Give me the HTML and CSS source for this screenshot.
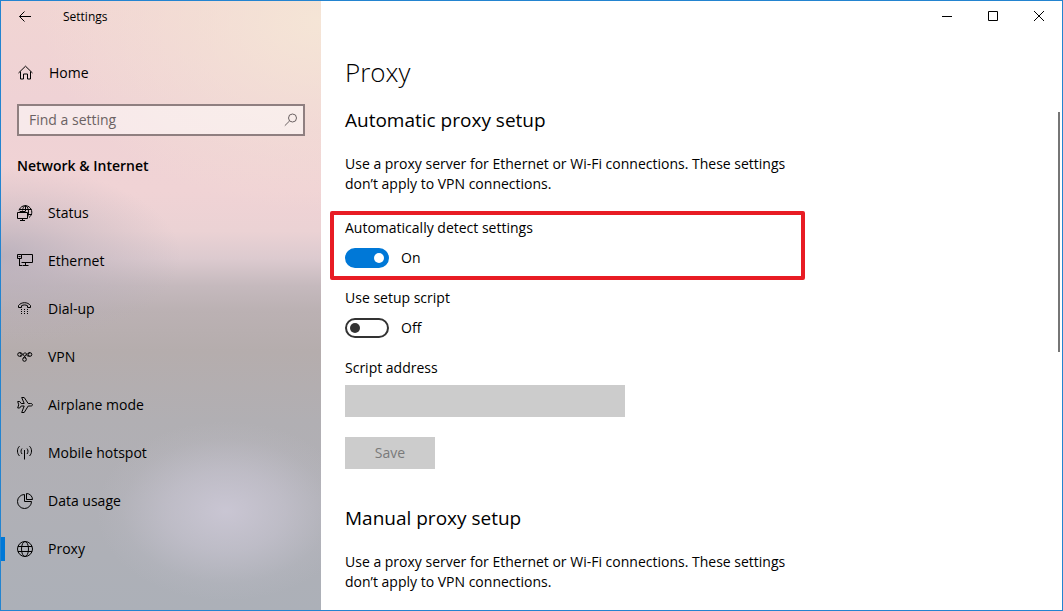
FILE: index.html
```html
<!DOCTYPE html>
<html lang="en">
<head>
    <meta charset="UTF-8">
    <meta name="viewport" content="width=device-width, initial-scale=1.0">
    <title>Settings</title>
    <link rel="stylesheet" href="styles.css">
</head>
<body>
    <div class="window">
        <!-- Sidebar -->
        <aside class="sidebar">
            <header class="titlebar">
                <button class="back-button" type="button" aria-label="Back">
                    <svg class="icon" viewBox="0 0 16 16"><path d="M14 7.5H2.500M7.500 2.500l-5 5 5 5"/></svg>
                </button>
                <span class="app-name">Settings</span>
            </header>

            <a class="nav-item home" href="#">
                <svg class="icon" viewBox="0 0 16 16"><path d="M1.5 8L8.500 1.200l7 6.800M3.500 6.500v7.500h3v-5h4v5h3V6.500"/></svg>
                Home
            </a>

            <div class="search">
                <input type="text" class="search-input" placeholder="Find a setting" aria-label="Find a setting">
                <svg class="icon search-icon" viewBox="0 0 16 16"><circle cx="8.5" cy="6" r="4"/><path d="M5.500 9L.8 13.700"/></svg>
            </div>

            <h2 class="category">Network &amp; Internet</h2>

            <nav>
                <a class="nav-item" href="#">
                    <svg class="icon" viewBox="0 0 16 16"><path d="M2 5.500A6.500 6.500 0 1 1 12 12.500M2.500 4.500h12M10.500 9.500h4.500M5.500 5.500c.3-2.500 1.300-4.500 3-5 2 1 3 3.500 3 6.500 0 2-.3 3.500-1 5M8.500 .5v6"/><path d="M.5 7.500h10v6H.5zM3 7.500v-1h5M5.500 13.500v2M3 15.500h5"/></svg>
                    Status
                </a>
                <a class="nav-item" href="#">
                    <svg class="icon" viewBox="0 0 16 16"><path d="M4.500 1.500h11v8H4.500M.5 1.500h4v4h-4zM2.500 5.500v7M2 12.500h3M1.500 3.500h2M8.500 9.500v3M5.500 12.500h6"/></svg>
                    Ethernet
                </a>
                <a class="nav-item" href="#">
                    <svg class="icon" viewBox="0 0 16 16"><path d="M1.500 6.500V4.500C3 2.700 5 1.700 7.500 1.700s4.500 1 6 2.800v2h-3V4.700c-2-1-4-1-6 0v1.800z"/><path class="solid" d="M4 8h1v1H4zM7 8h1v1H7zM10 8h1v1h-1zM4 10h1v1H4zM7 10h1v1H7zM10 10h1v1h-1zM4 12h1v1H4zM7 12h1v1H7zM10 12h1v1h-1z"/></svg>
                    Dial-up
                </a>
                <a class="nav-item" href="#">
                    <svg class="icon" viewBox="0 0 16 16"><circle cx="2.500" cy="5.500" r="1.800"/><circle cx="13" cy="5.500" r="1.800"/><circle cx="7.500" cy="10.500" r="1.800"/><path d="M2.500 3.700c2 0 3 1 4 2.300s1.500 2 2.500 3.300M3 7.300c2 0 2.500-1.500 3.500-2.600 1-1 2.500-1 3 0 0 1-1.500 2.300-3.300 4.500M13 3.700c-2 0-3 1.500-4 2.800M12.500 7.300c-1.500 0-2.500-.5-3-1.500"/></svg>
                    VPN
                </a>
                <a class="nav-item" href="#">
                    <svg class="icon" viewBox="0 0 16 16"><path d="M.7 4.500h2l1.500 2h3L4.700.5h2.500l4 6h2.500c1 0 1.800.5 1.800 1.300s-.8 1.200-1.800 1.200h-2.500l-4 6.500H4.700L7.200 9h-3l-1.500 2h-2l1-3.200z"/></svg>
                    Airplane mode
                </a>
                <a class="nav-item" href="#">
                    <svg class="icon" viewBox="0 0 16 16"><path d="M7.500 5v9.500M5 3.500c-1.300 1.500-1.300 4 0 5.500M10 3.500c1.300 1.500 1.300 4 0 5.500M2.500 1.200C-.2 3.700-.2 8.200 2.500 11M12.500 1.200c2.700 2.500 2.700 7 0 9.800"/></svg>
                    Mobile hotspot
                </a>
                <a class="nav-item" href="#">
                    <svg class="icon" viewBox="0 0 16 16"><path d="M7.500 1.500a7 7 0 1 0 7 7h-7zM9.500.5v6h6a6 6 0 0 0-6-6z"/></svg>
                    Data usage
                </a>
                <a class="nav-item active" href="#" aria-current="page">
                    <svg class="icon" viewBox="0 0 16 16"><circle cx="8" cy="8" r="7.500"/><ellipse cx="8" cy="8" rx="3.500" ry="7.500"/><path d="M1 5.500h14M1 10.500h14"/></svg>
                    Proxy
                </a>
            </nav>
        </aside>

        <!-- Page content -->
        <main class="main">
            <div class="window-buttons">
                <button type="button" aria-label="Minimize"><svg viewBox="0 0 10 10"><path d="M0 5.500h10"/></svg></button>
                <button type="button" aria-label="Maximize"><svg viewBox="0 0 10 10"><path d="M.5.5h9v9h-9z"/></svg></button>
                <button type="button" aria-label="Close"><svg viewBox="0 0 10 10"><path d="M0 0l10 10M10 0L0 10"/></svg></button>
            </div>

            <div class="content">
                <h1>Proxy</h1>

                <section>
                    <h2>Automatic proxy setup</h2>
                    <p>Use a proxy server for Ethernet or Wi-Fi connections. These settings don’t apply to VPN connections.</p>

                    <div class="field highlight">
                        <label for="autoDetect">Automatically detect settings</label>
                        <div class="toggle-row">
                            <input type="checkbox" class="toggle" id="autoDetect" checked>
                            <span>On</span>
                        </div>
                    </div>

                    <div class="field">
                        <label for="setupScript">Use setup script</label>
                        <div class="toggle-row">
                            <input type="checkbox" class="toggle" id="setupScript">
                            <span>Off</span>
                        </div>
                    </div>

                    <div class="field">
                        <label for="scriptAddress">Script address</label>
                        <input type="text" class="text-input" id="scriptAddress" disabled>
                    </div>

                    <button type="button" class="save-button" disabled>Save</button>
                </section>

                <section>
                    <h2>Manual proxy setup</h2>
                    <p>Use a proxy server for Ethernet or Wi-Fi connections. These settings don’t apply to VPN connections.</p>
                </section>
            </div>
            <div class="scrollbar"></div>
        </main>
    </div>
</body>
</html>
```
FILE: styles.css
```css
* {
    box-sizing: border-box;
}
body {
    margin: 0;
    font-family: "Open Sans", "Noto Sans", sans-serif;
    font-size: 14px;
    line-height: 20px;
    color: #000;
}
h1, h2, p {
    margin: 0;
    font-weight: normal;
}
button, input {
    font: inherit;
    margin: 0;
}
button {
    padding: 0;
    border: 0;
    background: none;
    color: inherit;
}
svg {
    fill: none;
    stroke: #000;
    stroke-width: 1;
}
.window {
    display: flex;
    height: 100vh;
    border: 1px solid #2384d0;
    overflow: hidden;
    background: #fff;
}

/* Sidebar */
.sidebar {
    flex: 0 0 320px;
    background:
        radial-gradient(ellipse 130px 90px at 225px 510px, rgba(204, 200, 214, 0.9), rgba(204, 200, 214, 0.5) 45%, rgba(204, 200, 214, 0.1) 80%, rgba(204, 200, 214, 0)),
        radial-gradient(ellipse 280px 190px at 320px 20px, rgba(245, 229, 214, 1), rgba(245, 229, 214, 0.5) 45%, rgba(245, 229, 214, 0)),
        radial-gradient(ellipse 180px 90px at 0 255px, rgba(180, 172, 184, 0.8), rgba(180, 172, 184, 0.4) 45%, rgba(180, 172, 184, 0)),
        linear-gradient(#f1d5d3 0, #efd2d5 100px, #f0d3d5 190px, #ebd2d4 230px, #dccacf 258px, #c5b9bd 285px, #bbb1b3 310px, #b5adad 350px, #b1afb3 420px, #b0b0b6 500px, #acb0b8 100%);
}
.icon {
    width: 16px;
    height: 16px;
    flex: none;
}
.titlebar {
    display: flex;
    align-items: center;
    height: 32px;
    font-size: 12px;
}
.back-button {
    display: flex;
    align-items: center;
    justify-content: center;
    width: 48px;
    height: 32px;
}
.app-name {
    padding-left: 14px;
}
.nav-item {
    position: relative;
    display: flex;
    align-items: center;
    gap: 15px;
    height: 48px;
    padding-left: 16px;
    color: #000;
    text-decoration: none;
}
.nav-item.active::before {
    content: "";
    position: absolute;
    left: 0;
    top: 12px;
    width: 4px;
    height: 24px;
    background: #0078d7;
}
.home {
    gap: 16px;
    margin: 16px 0 7px;
}
.search {
    position: relative;
    margin: 0 16px;
}
.search-input {
    display: block;
    width: 100%;
    height: 32px;
    padding: 0 32px 2px 10px;
    border: 2px solid #8f7f80;
    border-radius: 0;
    background: rgba(255, 255, 255, 0.5);
}
.search-input::placeholder {
    color: #6b6263;
    opacity: 1;
}
.search-icon {
    position: absolute;
    top: 8px;
    right: 5px;
    stroke: #6b6263;
}
.category {
    padding: 20px 16px 13px;
    font-size: 14px;
    line-height: 20px;
    font-weight: 600;
}

/* Main */
.main {
    position: relative;
    flex: 1;
    min-width: 0;
}
.window-buttons {
    display: flex;
    justify-content: flex-end;
}
.window-buttons button {
    display: flex;
    align-items: center;
    justify-content: center;
    width: 46px;
    height: 30px;
}
.window-buttons svg {
    width: 10px;
    height: 10px;
}
.content {
    padding: 21px 24px 0;
}
h1 {
    font-size: 26px;
    line-height: 40px;
    font-weight: 300;
}
.content h2 {
    margin-top: 14px;
    font-size: 19px;
    line-height: 28px;
}
.content section + section h2 {
    margin-top: 35px;
}
.content p {
    max-width: 460px;
    margin-top: 20px;
}
.field {
    margin-bottom: 20px;
}
.field label {
    display: block;
}
.highlight {
    max-width: 475px;
    margin: 17px 0 8px -15px;
    padding: 3px 11px 8px;
    border: 4px solid #e81c24;
    border-radius: 2px;
}
.toggle-row {
    display: flex;
    align-items: center;
    gap: 12px;
    margin-top: 10px;
}
.toggle {
    appearance: none;
    display: flex;
    align-items: center;
    width: 44px;
    height: 20px;
    padding: 0 3px;
    border: 2px solid #333;
    border-radius: 10px;
}
.toggle::before {
    content: "";
    width: 10px;
    height: 10px;
    border-radius: 50%;
    background: #333;
}
.toggle:checked {
    justify-content: flex-end;
    border-color: #0078d7;
    background: #0078d7;
}
.toggle:checked::before {
    background: #fff;
}
.text-input {
    display: block;
    width: 280px;
    height: 32px;
    margin-top: 7px;
    border: 0;
    background: #ccc;
}
.save-button {
    display: block;
    width: 90px;
    height: 32px;
    background: #ccc;
    color: #7a7a7a;
}
.solid {
    fill: #000;
    stroke: none;
}
.scrollbar {
    position: absolute;
    top: 111px;
    right: 2px;
    width: 2px;
    height: 240px;
    background: #767676;
}
```
